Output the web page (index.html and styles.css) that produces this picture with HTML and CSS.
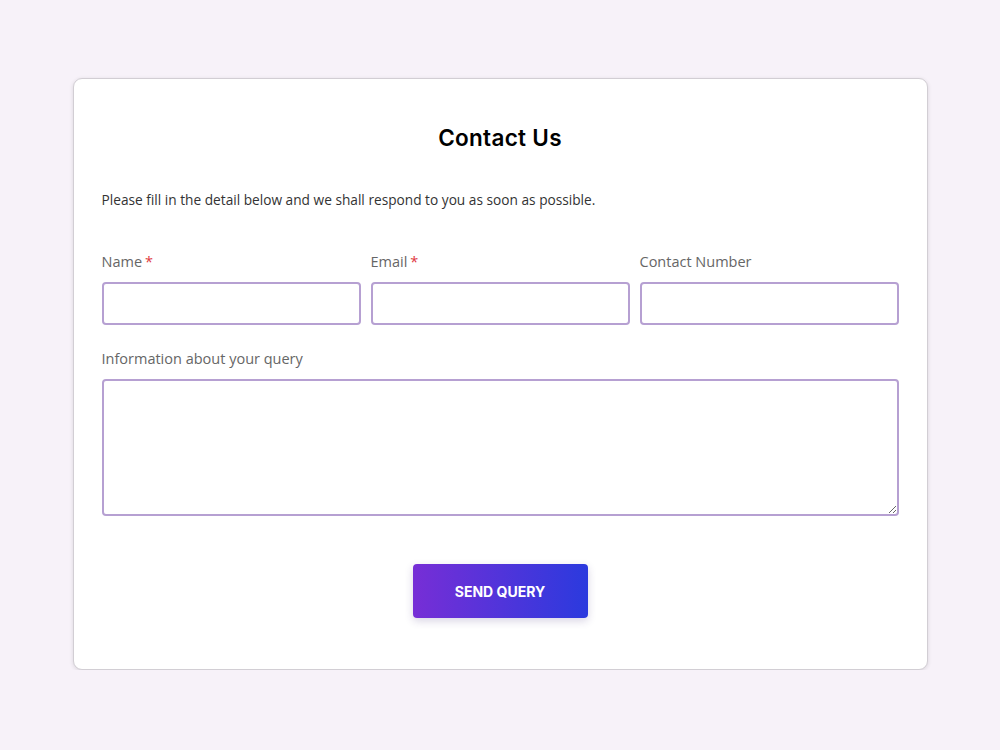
FILE: index.html
```html
<!DOCTYPE html>
<html lang="en">
<head>
    <meta charset="UTF-8">
    <meta name="viewport" content="width=device-width, initial-scale=1.0">
    <title>Contact Us</title>
    <link rel="stylesheet" href="styles.css">
</head>
<body>
    <div class="contact-card">
        <h2 class="contact-title">Contact Us</h2>
        <p class="contact-intro">Please fill in the detail below and we shall respond to you as soon as possible.</p>
        <form class="contact-form">
            <div class="field-row">
                <div class="field">
                    <label class="field-label" for="name">Name<span class="req">*</span></label>
                    <input type="text" id="name" class="input-field">
                </div>
                <div class="field">
                    <label class="field-label" for="email">Email<span class="req">*</span></label>
                    <input type="email" id="email" class="input-field">
                </div>
                <div class="field">
                    <label class="field-label" for="phone">Contact Number</label>
                    <input type="text" id="phone" class="input-field">
                </div>
            </div>
            <div class="field">
                <label class="field-label" for="query">Information about your query</label>
                <textarea id="query" class="input-field text-area"></textarea>
            </div>
            <div class="actions">
                <button type="submit" class="submit-btn">SEND QUERY</button>
            </div>
        </form>
    </div>
</body>
</html>
```

FILE: styles.css
```css
body {
    font-family: "Open Sans", "Noto Sans", sans-serif;
    background-color: #f7f2f9;
    margin: 0;
    padding-top: 78px;
}
.contact-card {
    box-sizing: border-box;
    width: 855px;
    margin: 0 auto;
    background-color: #fff;
    border: 1px solid #d2ced4;
    border-radius: 9px;
    box-shadow: 0 1px 4px rgba(0, 0, 0, 0.12);
    padding: 43px 28px 51px 28px;
}
.contact-title {
    margin: 0;
    font-family: "Inter", "Liberation Sans", sans-serif;
    font-size: 22.5px;
    font-weight: 600;
    letter-spacing: 0.3px;
    line-height: 32px;
    text-align: center;
    color: #000;
}
.contact-intro {
    margin: 36px 0 0 0;
    font-size: 13.7px;
    line-height: 20px;
    color: #333;
}
.contact-form {
    margin-top: 42px;
}
.field-row {
    display: grid;
    grid-template-columns: 1fr 1fr 1fr;
    gap: 10px;
    margin-bottom: 24px;
}
.field {
    display: flex;
    flex-direction: column;
}
.field-label {
    font-size: 14.5px;
    line-height: 20px;
    color: #666;
    margin-bottom: 10px;
}
.req {
    color: #e0383e;
    margin-left: 3px;
}
.input-field {
    box-sizing: border-box;
    height: 43px;
    width: 100%;
    border: 2px solid #b6a0d2;
    border-radius: 4px;
    background: #fff;
    padding: 8px 10px;
    font-family: inherit;
    font-size: 14px;
}
.text-area {
    height: 137px;
    resize: vertical;
}
.actions {
    display: flex;
    justify-content: center;
    margin-top: 48px;
}
.submit-btn {
    width: 175px;
    height: 54px;
    border: none;
    border-radius: 4px;
    background: linear-gradient(90deg, #772ed6, #2b3ade);
    color: #fff;
    font-family: "Inter", "Liberation Sans", sans-serif;
    font-size: 14px;
    font-weight: 700;
    box-shadow: 0 3px 8px rgba(60, 40, 120, 0.2);
    cursor: pointer;
}
```
